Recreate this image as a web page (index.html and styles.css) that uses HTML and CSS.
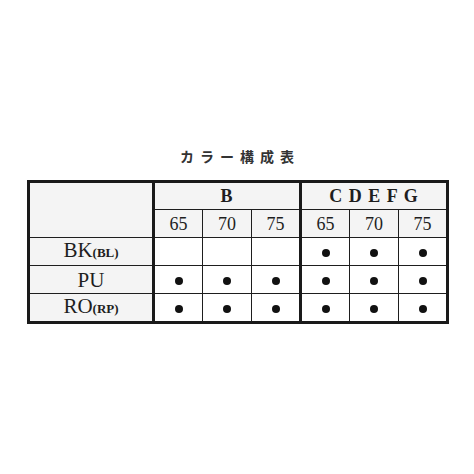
FILE: index.html
```html
<!DOCTYPE html>
<html lang="ja">
<head>
<meta charset="utf-8">
<link rel="stylesheet" href="styles.css">
</head>
<body>
<div class="page">
  <h1 class="title">カラー構成表</h1>
  <table class="chart">
    <colgroup>
      <col class="c-label">
      <col class="c-num"><col class="c-num"><col class="c-num">
      <col class="c-num"><col class="c-num"><col class="c-num">
    </colgroup>
    <thead>
      <tr class="r-group">
        <th class="corner" rowspan="2"></th>
        <th class="group sep" colspan="3">B</th>
        <th class="group sep" colspan="3">C D E F G</th>
      </tr>
      <tr class="r-size">
        <th class="size sep">65</th><th class="size">70</th><th class="size">75</th>
        <th class="size sep">65</th><th class="size">70</th><th class="size">75</th>
      </tr>
    </thead>
    <tbody>
      <tr>
        <th class="label">BK<small>(BL)</small></th>
        <td class="sep"></td><td></td><td></td>
        <td class="sep"><span class="dot"></span></td><td><span class="dot"></span></td><td><span class="dot"></span></td>
      </tr>
      <tr>
        <th class="label">PU</th>
        <td class="sep"><span class="dot"></span></td><td><span class="dot"></span></td><td><span class="dot"></span></td>
        <td class="sep"><span class="dot"></span></td><td><span class="dot"></span></td><td><span class="dot"></span></td>
      </tr>
      <tr>
        <th class="label">RO<small>(RP)</small></th>
        <td class="sep"><span class="dot"></span></td><td><span class="dot"></span></td><td><span class="dot"></span></td>
        <td class="sep"><span class="dot"></span></td><td><span class="dot"></span></td><td><span class="dot"></span></td>
      </tr>
    </tbody>
  </table>
</div>
</body>
</html>
```

FILE: styles.css
```css
html, body {
  margin: 0;
  padding: 0;
  background: #ffffff;
}

.page {
  width: 474px;
  height: 474px;
  display: flex;
  flex-direction: column;
  align-items: flex-start;
  padding-top: 146px;
  box-sizing: border-box;
}

.title {
  margin: 0 0 14px 0;
  width: 474px;
  text-align: center;
  font-family: "Noto Sans CJK JP", "Noto Sans", sans-serif;
  font-weight: 700;
  font-size: 14px;
  line-height: 20px;
  letter-spacing: 6px;
  text-indent: 6px;
  color: #333333;
}

.chart {
  margin-left: 27px;
  width: 419px;
  border-collapse: collapse;
  border: 3px solid #1a1a1a;
  table-layout: fixed;
  font-family: "Liberation Serif", "Times New Roman", serif;
  color: #1e1e1e;
}

.c-label { width: 125px; }
.c-num { width: 49px; }

.chart th,
.chart td {
  border: 1.5px solid #1e1e1e;
  padding: 0;
  text-align: center;
  vertical-align: middle;
}

.chart .sep {
  border-left: 3px solid #1a1a1a;
}

.r-group th { height: 26px; }
.r-size th { height: 27px; }
.chart tbody th,
.chart tbody td { height: 27px; }

.corner {
  background: #f4f4f4;
  border-right: 3px solid #1a1a1a;
}

.group {
  background: #f4f4f4;
  font-weight: 700;
  font-size: 18px;
  letter-spacing: 1px;
  line-height: 20px;
}

.size {
  background: #f4f4f4;
  font-weight: 400;
  font-size: 18px;
  line-height: 20px;
}

.label {
  background: #f4f4f4;
  font-weight: 400;
  font-size: 21px;
  line-height: 24px;
  border-right: 3px solid #1a1a1a;
}

.label small {
  font-size: 13px;
  font-weight: 700;
}

.chart td {
  background: #ffffff;
}

.dot {
  display: inline-block;
  width: 8px;
  height: 8px;
  border-radius: 50%;
  background: #111111;
  vertical-align: middle;
}
```
